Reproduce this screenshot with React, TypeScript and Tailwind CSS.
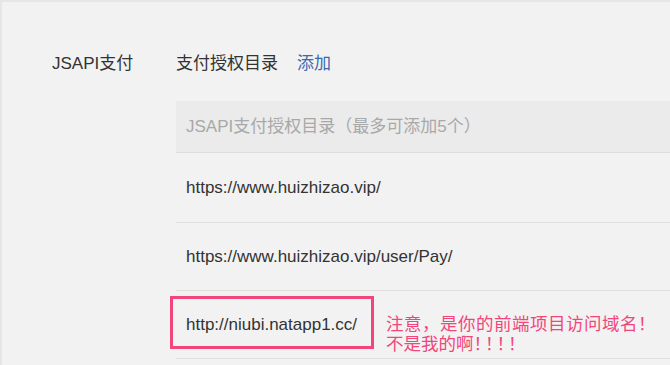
const rows = [
  'https://www.huizhizao.vip/',
  'https://www.huizhizao.vip/user/Pay/',
  'http://niubi.natapp1.cc/',
];

export default function App() {
  return (
    <div
      className="relative w-[670px] h-[365px] overflow-hidden bg-[#f2f2f2] text-[17px] text-[#333]"
      style={{ fontFamily: '"Liberation Sans", Arial, "Noto Sans CJK SC", sans-serif' }}
    >
      <div className="absolute inset-0 border-t-2 border-l-2 border-[#e6e6e6] pointer-events-none" />

      <div className="flex pt-[53px]">
        <div className="w-[176px] pl-[52px] leading-[22px]">JSAPI支付</div>
        <div className="flex-1">
          <div className="flex gap-[19px] leading-[22px]">
            <span>支付授权目录</span>
            <span className="text-[#3b69b0]">添加</span>
          </div>

          <div className="mt-[26px]">
            <div className="h-[52px] flex items-center pl-[10px] bg-[#ebebeb] border-b border-[#dedede] text-[#a8a8a8]">
              JSAPI支付授权目录（最多可添加5个）
            </div>
            {rows.map((r, i) => (
              <div
                key={r}
                className={`flex items-center pl-[10px] border-b border-[#e0e0e0] ${i === 0 ? 'h-[70px]' : 'h-[68px]'}`}
              >
                {r}
              </div>
            ))}
          </div>
        </div>
      </div>

      {/* annotation */}
      <div className="absolute left-[170px] top-[296px] w-[204px] h-[53px] border-[3px] border-[#f2457b]" />
      <div className="absolute left-[386px] top-[314px] text-[17.5px] leading-[20px] text-[#f2457b]">
        <div className="tracking-[0.5px]">注意，是你的前端项目访问域名！</div>
        <div>
          不是我的啊<span className="tracking-[-6px]">！！！！</span>
        </div>
      </div>
    </div>
  );
}
